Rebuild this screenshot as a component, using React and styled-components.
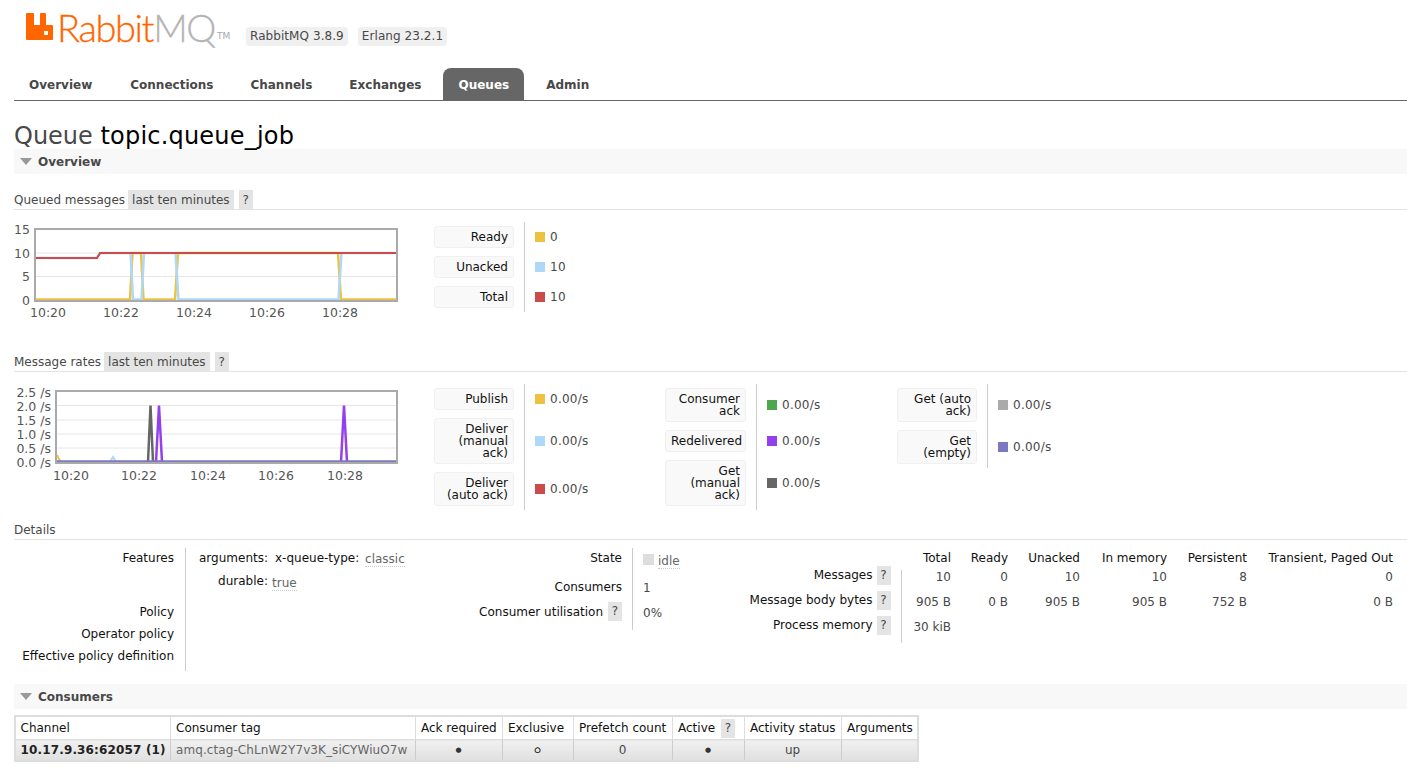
import React from "react";
import styled, { createGlobalStyle } from "styled-components";

const FONT = `"DejaVu Sans", Verdana, sans-serif`;

const COLORS = {
  yellow: "#edc240",
  blue: "#afd8f8",
  red: "#cb4b4b",
  green: "#4da74d",
  purple: "#9440ed",
  dark: "#666666",
  grey: "#aaaaaa",
  indigo: "#7c79c2",
};

const TABS = ["Overview", "Connections", "Channels", "Exchanges", "Queues", "Admin"];

const QUEUE_LEGEND = [
  { label: "Ready", color: COLORS.yellow, value: "0" },
  { label: "Unacked", color: COLORS.blue, value: "10" },
  { label: "Total", color: COLORS.red, value: "10" },
];

const RATE_LEGENDS = [
  {
    width: "231px",
    labelWidth: "80px",
    rows: [
      { label: "Publish", color: COLORS.yellow, value: "0.00/s" },
      { label: "Deliver (manual ack)", color: COLORS.blue, value: "0.00/s" },
      { label: "Deliver (auto ack)", color: COLORS.red, value: "0.00/s" },
    ],
  },
  {
    width: "232px",
    labelWidth: "81px",
    rows: [
      { label: "Consumer ack", color: COLORS.green, value: "0.00/s" },
      { label: "Redelivered", color: COLORS.purple, value: "0.00/s" },
      { label: "Get (manual ack)", color: COLORS.dark, value: "0.00/s" },
    ],
  },
  {
    width: "232px",
    labelWidth: "80px",
    rows: [
      { label: "Get (auto ack)", color: COLORS.grey, value: "0.00/s" },
      { label: "Get (empty)", color: COLORS.indigo, value: "0.00/s" },
    ],
  },
];

const TOTALS_HEAD = [
  { title: "Total", width: 50 },
  { title: "Ready", width: 57 },
  { title: "Unacked", width: 72 },
  { title: "In memory", width: 87 },
  { title: "Persistent", width: 80 },
  { title: "Transient, Paged Out", width: 146 },
];

const TOTALS = [
  { label: "Messages", cells: ["10", "0", "10", "10", "8", "0"] },
  { label: "Message body bytes", cells: ["905 B", "0 B", "905 B", "905 B", "752 B", "0 B"] },
  { label: "Process memory", cells: ["30 kiB"], last: true },
];

const CONSUMER_COLS = [155, 245, 87, 71, 99, 72, 97, 77];

function LogoMark() {
  return (
    <svg width="27" height="27" viewBox="0 0 27 27">
      <path
        fill="#ff6600"
        fillRule="evenodd"
        d="M0 1a1 1 0 0 1 1-1h6a1 1 0 0 1 1 1v11h6V1a1 1 0 0 1 1-1h4a1 1 0 0 1 1 1v11h6a1 1 0 0 1 1 1v13a1 1 0 0 1-1 1H1a1 1 0 0 1-1-1zM18 18v4h4v-4z"
      />
    </svg>
  );
}

function QueueChart() {
  return (
    <svg width="384" height="100" viewBox="0 0 384 100">
      <g fontFamily={FONT} fontSize="12.5" fill="#555">
        <text x="16" y="12" textAnchor="end">15</text>
        <text x="16" y="36" textAnchor="end">10</text>
        <text x="16" y="59" textAnchor="end">5</text>
        <text x="16" y="83" textAnchor="end">0</text>
        {[34, 107, 180, 253, 326].map((x, i) => (
          <text key={x} x={x} y="95" textAnchor="middle">{`10:${20 + i * 2}`}</text>
        ))}
      </g>
      <path d="M21 31H383M21 54.5H383" stroke="#e6e6e6" />
      <polyline
        fill="none"
        stroke={COLORS.yellow}
        strokeWidth="2.5"
        points="21,77.5 116,77.5 118.5,31 127,31 129.5,77.5 161,77.5 164,31 324,31 327,77.5 383,77.5"
      />
      <polyline
        fill="none"
        stroke={COLORS.blue}
        strokeWidth="2.5"
        points="21,36 83,36 86,31 116.5,31 119,77.5 127.5,77.5 130,31 161.5,31 164.5,77.5 324.5,77.5 327.5,31 383,31"
      />
      <polyline
        fill="none"
        stroke={COLORS.red}
        strokeWidth="2"
        points="21,36 83,36 86,31 383,31"
      />
      <rect x="21" y="7" width="362" height="72" fill="none" stroke="#aaa" strokeWidth="2" />
    </svg>
  );
}

function RateChart() {
  return (
    <svg width="384" height="100" viewBox="0 0 384 100">
      <g fontFamily={FONT} fontSize="12.5" fill="#555">
        {["2.5", "2.0", "1.5", "1.0", "0.5", "0.0"].map((v, i) => (
          <text key={v} x="37" y={13 + i * 14} textAnchor="end">{`${v} /s`}</text>
        ))}
        {[57, 125, 194, 262, 331].map((x, i) => (
          <text key={x} x={x} y="96" textAnchor="middle">{`10:${20 + i * 2}`}</text>
        ))}
      </g>
      <path d="M42 21.5H383M42 36H383M42 50H383M42 64H383" stroke="#e6e6e6" />
      <polyline fill="none" stroke={COLORS.yellow} strokeWidth="2" points="43,71 46.5,78" />
      <polyline fill="none" stroke={COLORS.blue} strokeWidth="2" points="96,78 99,73 102,78" />
      <polyline fill="none" stroke={COLORS.dark} strokeWidth="2.5" points="134,78 136.5,21.5 139,78" />
      <polyline fill="none" stroke={COLORS.purple} strokeWidth="2.5" points="142,78 145,21.5 148,78" />
      <polyline fill="none" stroke={COLORS.purple} strokeWidth="2.5" points="327,78 330,21.5 333,78" />
      <path d="M42 77.5H383" stroke={COLORS.indigo} strokeWidth="2.5" />
      <rect x="42" y="7" width="341" height="72" fill="none" stroke="#aaa" strokeWidth="2" />
    </svg>
  );
}

function Legend({ rows, width, labelWidth = "80px" }) {
  return (
    <LegendTable $width={width} $labelWidth={labelWidth}>
      {rows.map((row) => (
        <LegendRow key={row.label}>
          <LegendLabel>{row.label}</LegendLabel>
          <LegendValue>
            <Swatch $color={row.color} />
            {row.value}
          </LegendValue>
        </LegendRow>
      ))}
    </LegendTable>
  );
}

export default function App() {
  return (
    <>
      <GlobalStyle />
      <Page>
        <Header>
          <Logo>
            <LogoMark />
            <LogoText>
              Rabbit<LogoGrey>MQ</LogoGrey>
            </LogoText>
            <LogoTm>TM</LogoTm>
          </Logo>
          <Version>RabbitMQ 3.8.9</Version>
          <Version>Erlang 23.2.1</Version>
        </Header>

        <Tabs>
          {TABS.map((tab) => (
            <Tab key={tab} $active={tab === "Queues"}>{tab}</Tab>
          ))}
        </Tabs>

        <Title>
          Queue <b>topic.queue_job</b>
        </Title>

        <SectionBar>
          <Arrow />
          Overview
        </SectionBar>

        <SubHead $first>
          Queued messages <Pill>last ten minutes</Pill> <Help>?</Help>
        </SubHead>
        <ChartRow $height="120px">
          <QueueChart />
          <Legend rows={QUEUE_LEGEND} />
        </ChartRow>

        <SubHead>
          Message rates <Pill>last ten minutes</Pill> <Help>?</Help>
        </SubHead>
        <ChartRow $height="126px">
          <RateChart />
          <RateColumns>
            {RATE_LEGENDS.map((col) => (
              <Legend key={col.rows[0].label} {...col} />
            ))}
          </RateColumns>
        </ChartRow>

        <SubHead>Details</SubHead>
        <DetailsRow>
          <FactsTable>
            <FactLabel>Features</FactLabel>
            <FeatureValue>
              <FeatureKey>arguments:</FeatureKey>
              <ArgCell>
                x-queue-type: <Dotted>classic</Dotted>
              </ArgCell>
              <FeatureKey>durable:</FeatureKey>
              <FeatureFlag>
                <Dotted>true</Dotted>
              </FeatureFlag>
            </FeatureValue>
            <FactLabel>Policy</FactLabel>
            <div />
            <FactLabel>Operator policy</FactLabel>
            <div />
            <FactLabel>Effective policy definition</FactLabel>
            <div />
          </FactsTable>

          <StateTable>
            <StateLabel>State</StateLabel>
            <StateValue $pad="5px">
              <IdleBox />
              <Dotted>idle</Dotted>
            </StateValue>
            <StateLabel>Consumers</StateLabel>
            <StateValue>1</StateValue>
            <StateLabel $help>
              Consumer utilisation <Help>?</Help>
            </StateLabel>
            <StateValue>0%</StateValue>
          </StateTable>

          <TotalsTable>
            <colgroup>
              <col style={{ width: 150 }} />
              {TOTALS_HEAD.map((col) => (
                <col key={col.title} style={{ width: col.width }} />
              ))}
            </colgroup>
            <tbody>
              <TotalsHeadRow>
                <td />
                {TOTALS_HEAD.map((col) => (
                  <TotalsHead key={col.title}>{col.title}</TotalsHead>
                ))}
              </TotalsHeadRow>
              {TOTALS.map((row) => (
                <TotalsRow key={row.label} $last={row.last}>
                  <TotalsLabel>
                    <TotalsLabelInner>
                      {row.label} <Help>?</Help>
                    </TotalsLabelInner>
                  </TotalsLabel>
                  {TOTALS_HEAD.map((col, i) => (
                    <TotalsCell key={col.title}>{row.cells[i]}</TotalsCell>
                  ))}
                </TotalsRow>
              ))}
            </tbody>
          </TotalsTable>
        </DetailsRow>

        <SectionBar $consumers>
          <Arrow />
          Consumers
        </SectionBar>

        <ConsumerTable>
          <colgroup>
            {CONSUMER_COLS.map((w, i) => (
              <col key={i} style={{ width: w }} />
            ))}
          </colgroup>
          <thead>
            <tr>
              <th>Channel</th>
              <th>Consumer tag</th>
              <th>Ack required</th>
              <th>Exclusive</th>
              <th>Prefetch count</th>
              <th>
                Active <Help>?</Help>
              </th>
              <th>Activity status</th>
              <th>Arguments</th>
            </tr>
          </thead>
          <tbody>
            <tr>
              <ChannelCell>10.17.9.36:62057 (1)</ChannelCell>
              <TagCell>amq.ctag-ChLnW2Y7v3K_siCYWiuO7w</TagCell>
              <CenterCell>●</CenterCell>
              <CenterCell $ring>○</CenterCell>
              <CenterCell $big>0</CenterCell>
              <CenterCell>●</CenterCell>
              <CenterCell $big>up</CenterCell>
              <CenterCell />
            </tr>
          </tbody>
        </ConsumerTable>
      </Page>
    </>
  );
}

const GlobalStyle = createGlobalStyle`
  html, body {
    margin: 0;
    padding: 0;
    background: #fff;
    overflow: hidden;
  }
  body {
    font-family: ${FONT};
    font-size: 12px;
    color: #484848;
  }
`;

const Page = styled.div`
  width: 1407px;
  height: 772px;
  padding-left: 14px;
  box-sizing: border-box;
  overflow: hidden;
`;

const Header = styled.div`
  height: 68px;
  display: flex;
  align-items: flex-start;
`;

const Logo = styled.div`
  display: flex;
  align-items: flex-start;
  width: 220px;
  margin-left: 12px;
  padding-top: 13px;
  box-sizing: border-box;
`;

const LogoText = styled.span`
  font-family: "Lato", "Liberation Sans", sans-serif;
  font-weight: 300;
  font-size: 38px;
  line-height: 30px;
  letter-spacing: -1.4px;
  color: #ff6600;
  margin: -1px 0 0 4px;
  -webkit-text-stroke: 0.3px currentColor;
`;

const LogoGrey = styled.span`
  color: #b4b4b4;
`;

const LogoTm = styled.span`
  font-size: 9px;
  color: #aaa;
  margin: 18px 0 0 2px;
`;

const Version = styled.span`
  margin: 27px 10px 0 0;
  padding: 0 4px;
  height: 19px;
  line-height: 19px;
  background: #f0f0f0;
  border-radius: 4px;
  font-size: 12px;
  letter-spacing: 0.07px;
  color: #484848;
`;

const Tabs = styled.div`
  display: flex;
  gap: 7px;
  height: 33px;
  border-bottom: 1px solid #666;
  box-sizing: border-box;
`;

const Tab = styled.div`
  height: 32px;
  line-height: 34px;
  padding: 0 15px;
  font-size: 12px;
  font-weight: bold;
  border-radius: 8px 8px 0 0;
  color: ${({ $active }) => ($active ? "#fff" : "#484848")};
  background: ${({ $active }) => ($active ? "#666" : "transparent")};

  &:first-child {
    padding-right: 16px;
  }
`;

const Title = styled.h1`
  margin: 0;
  height: 48px;
  padding-top: 21px;
  box-sizing: border-box;
  font-size: 24px;
  line-height: 28px;
  font-weight: normal;
  color: #484848;

  b {
    font-weight: normal;
    letter-spacing: 0.2px;
    color: #000;
  }
`;

const SectionBar = styled.div`
  display: flex;
  align-items: center;
  height: 25px;
  background: #f8f8f8;
  font-weight: bold;
  font-size: 12px;
  color: #484848;
  padding-left: 6px;
  margin-top: ${({ $consumers }) => ($consumers ? "13px" : "0")};
`;

const Arrow = styled.span`
  width: 0;
  height: 0;
  margin-right: 6px;
  border-left: 6px solid transparent;
  border-right: 6px solid transparent;
  border-top: 7px solid #999;
`;

const SubHead = styled.div`
  height: 23px;
  line-height: 21px;
  box-sizing: border-box;
  border-bottom: 1px solid #e4e4e4;
  font-size: 12px;
  margin-top: ${({ $first }) => ($first ? "13px" : "7px")};
  padding-top: 3px;
  display: flex;
  align-items: flex-start;
  gap: 3px;

  span {
    line-height: 21px;
  }
`;

const Pill = styled.span`
  background: #e4e4e4;
  padding: 0 4px;
  height: 19px;
`;

const Help = styled.span`
  display: inline-block;
  flex: none;
  background: #e4e4e4;
  color: #484848;
  font-weight: normal;
  width: 14px;
  height: 19px;
  line-height: 19px;
  text-align: center;
  margin-left: 2px;
`;

const ChartRow = styled.div`
  display: flex;
  align-items: flex-start;
  gap: 36px;
  padding-top: 12px;
  height: ${({ $height }) => $height};
`;

const RateColumns = styled.div`
  display: flex;
`;

const LegendTable = styled.div`
  display: grid;
  grid-template-columns: calc(${({ $labelWidth }) => $labelWidth} + 10px) auto;
  align-content: start;
  width: ${({ $width }) => $width || "auto"};
`;

const LegendRow = styled.div`
  display: contents;
`;

const LegendLabel = styled.div`
  box-sizing: border-box;
  margin: 4px 10px 4px 0;
  padding: 4px 5px;
  line-height: 12px;
  background: #f9f9f9;
  border: 1px solid #f0f0f0;
  border-radius: 3px;
  text-align: right;
  color: #111;
`;

const LegendValue = styled.div`
  border-left: 1px solid #ccc;
  padding-left: 10px;
  display: flex;
  align-items: center;
  gap: 5px;
  letter-spacing: 0.25px;
`;

const Swatch = styled.span`
  width: 10px;
  height: 10px;
  background: ${({ $color }) => $color};
`;

const DetailsRow = styled.div`
  display: flex;
  align-items: flex-start;
  padding-top: 8px;
`;

const FactsTable = styled.div`
  display: grid;
  grid-template-columns: 172px 280px;
  grid-template-rows: 54px 22px 22px 25px;
`;

const FactLabel = styled.div`
  text-align: right;
  padding: 3px 11px 0 0;
  border-right: 1px solid #ccc;
  color: #111;
`;

const FeatureValue = styled.div`
  display: grid;
  grid-template-columns: 70px auto;
  column-gap: 4px;
  row-gap: 9px;
  align-content: start;
  padding: 3px 0 0 12px;
  color: #111;
`;

const FeatureKey = styled.span`
  text-align: right;
`;

const ArgCell = styled.span`
  padding-left: 3px;
  word-spacing: 2px;
`;

const FeatureFlag = styled.span`
  padding-top: 1px;
`;

const Dotted = styled.span`
  color: #666;
  border-bottom: 1px dotted #ccc;
  position: relative;
  top: 1px;
`;

const StateTable = styled.div`
  display: grid;
  grid-template-columns: 167px 118px;
  grid-template-rows: 29px 25px 28px;
`;

const StateLabel = styled.div`
  padding: 3px 10px 0 0;
  line-height: 14px;
  text-align: right;
  border-right: 1px solid #ccc;
  color: #111;

  ${({ $help }) =>
    $help &&
    "display: flex; justify-content: flex-end; align-items: flex-start; line-height: 21px; padding-top: 0; gap: 3px;"}
`;

const StateValue = styled.div`
  padding: ${({ $pad }) => $pad || "4px"} 0 0 10px;
  display: flex;
  align-items: flex-start;
  gap: 4px;
`;

const IdleBox = styled.span`
  width: 11px;
  height: 11px;
  margin-top: 1px;
  background: #ddd;
`;

const TotalsTable = styled.table`
  border-collapse: collapse;
  table-layout: fixed;
  width: 642px;
  font-size: 12px;

  td,
  th {
    padding: 0;
  }
`;

const TotalsHeadRow = styled.tr`
  height: 22px;
`;

const TotalsHead = styled.th`
  font-weight: normal;
  color: #111;
  text-align: right;
  vertical-align: top;
  line-height: 14px;
  white-space: nowrap;
  && {
    padding-top: 3px;
  }
`;

const TotalsRow = styled.tr`
  height: ${({ $last }) => ($last ? "23px" : "25px")};
`;

const TotalsLabel = styled.td`
  vertical-align: top;
  color: #111;
  white-space: nowrap;
  border-right: 1px solid #ccc;
`;

const TotalsLabelInner = styled.div`
  display: flex;
  justify-content: flex-end;
  gap: 2px;
  line-height: 19px;
  height: 19px;
  margin: -4px 10px 0 0;
`;

const TotalsCell = styled.td`
  text-align: right;
  vertical-align: top;
  line-height: 14px;
  white-space: nowrap;
`;

const ConsumerTable = styled.table`
  border-collapse: collapse;
  table-layout: fixed;
  width: 903px;
  margin-top: 6px;
  font-size: 12px;
  border: 2px solid #ddd;

  th {
    font-weight: normal;
    text-align: left;
    padding: 0 0 0 5.5px;
    height: 22px;
    color: #111;
    background: #fff;
    border: 1px solid #ddd;
    white-space: nowrap;
    overflow: hidden;
  }

  td {
    height: 20px;
    line-height: 14px;
    padding: 0 5.5px;
    border: 1px solid #ccc;
    background: linear-gradient(#f0f0f0, #e0e0e0);
    white-space: nowrap;
    overflow: hidden;
  }

  th:first-child,
  td:first-child {
    padding-left: 4.5px;
  }
`;

const ChannelCell = styled.td`
  font-weight: bold;
  letter-spacing: 0.15px;
  color: #222;
`;

const TagCell = styled.td`
  color: #666;
  letter-spacing: 0.08px;
`;

const CenterCell = styled.td`
  text-align: center;
  font-size: ${({ $big }) => ($big ? "12px" : "7px")};
  -webkit-text-stroke: ${({ $ring }) => ($ring ? "0.4px #222" : "0")};
  color: ${({ $big }) => ($big ? "#484848" : "#333")};
`;
